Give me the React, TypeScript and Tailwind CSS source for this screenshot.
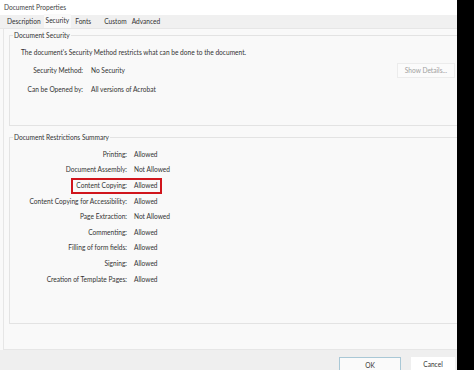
const restrictions: [string, string][] = [
  ["Printing:", "Allowed"],
  ["Document Assembly:", "Not Allowed"],
  ["Content Copying:", "Allowed"],
  ["Content Copying for Accessibility:", "Allowed"],
  ["Page Extraction:", "Not Allowed"],
  ["Commenting:", "Allowed"],
  ["Filling of form fields:", "Allowed"],
  ["Signing:", "Allowed"],
  ["Creation of Template Pages:", "Allowed"],
];

const tabs = ["Description", "Security", "Fonts", "Custom", "Advanced"];

function GroupBox({ title, className, children }: { title: string; className: string; children: React.ReactNode }) {
  return (
    <div className={`relative ml-[5px] mr-[-4px] border border-[#e3e3e3] ${className}`}>
      <span className="absolute left-[3px] top-[-6px] bg-[#f9f9f9] px-px leading-[10px] text-[#333]">{title}</span>
      {children}
    </div>
  );
}

export default function App() {
  return (
    <div
      className="flex h-[370px] w-[474px] overflow-hidden whitespace-nowrap bg-black text-[6.6px] text-[#333]"
      style={{ fontFamily: 'Lato, "Noto Sans", sans-serif' }}
    >
      <div className="flex w-[457px] flex-col overflow-hidden bg-[#f9f9f9]">
        <div className="flex h-[15px] items-center bg-white pl-[4px] text-[#444]">Document Properties</div>

        <div className="flex h-[14px] items-end border-b border-[#e6e6e6] bg-[#f0f0f0] pl-[5px]">
          {tabs.map((t) => (
            <div
              key={t}
              className={
                t === "Security"
                  ? "mr-[2px] h-[14px] bg-[#f9f9f9] px-[2px] pt-[1px] leading-[10px]"
                  : t === "Fonts"
                    ? "mr-[9px] h-[12px] px-[2px] leading-[10px]"
                    : "mr-px h-[12px] px-[2px] leading-[10px]"
              }
            >
              {t}
            </div>
          ))}
        </div>

        <div className="ml-[3px] flex flex-1 flex-col border-b border-l border-[#e6e6e6] pt-[6px]">
          <GroupBox title="Document Security" className="h-[91px] pt-[11px]">
            <div className="pl-[11px] leading-[10px]">
              The document's Security Method restricts what can be done to the document.
            </div>
            <div className="mt-[6px] flex h-[15px] items-center justify-between">
              <div className="flex">
                <span className="w-[73px] text-right">Security Method:</span>
                <span className="ml-[8px]">No Security</span>
              </div>
              <button className="mr-[5px] h-[15px] w-[58px] border border-[#ececec] bg-[#fbfbfb] text-[#a0a0a0]">
                Show Details...
              </button>
            </div>
            <div className="mt-[4px] flex h-[15px] items-center">
              <span className="w-[73px] text-right">Can be Opened by:</span>
              <span className="ml-[8px]">All versions of Acrobat</span>
            </div>
          </GroupBox>

          <GroupBox title="Document Restrictions Summary" className="mt-[11px] h-[187px] pt-[9px]">
            <div className="flex flex-col">
              {restrictions.map(([label, value]) => (
                <div key={label} className="flex h-[15.6px] items-center">
                  {label === "Content Copying:" ? (
                    <div className="ml-[61px] flex h-[16px] w-[91px] items-center border-2 border-[#d0151c]">
                      <span className="w-[54px] text-right">{label}</span>
                      <span className="ml-[7px]">{value}</span>
                    </div>
                  ) : (
                    <>
                      <span className="w-[117px] text-right">{label}</span>
                      <span className="ml-[7px]">{value}</span>
                    </>
                  )}
                </div>
              ))}
            </div>
          </GroupBox>
        </div>

        <div className="flex h-[20px] items-end justify-end gap-[10px] bg-[#efefef] pr-[2px]">
          <button className="h-[13px] w-[62px] border border-b-0 border-[#a9c8d6] bg-[#fafafa] pt-[1px] leading-[10px]">
            OK
          </button>
          <button className="h-[13px] w-[44px] bg-white pt-[1px] leading-[10px]">Cancel</button>
        </div>
      </div>
      <div className="flex-1 bg-black" />
    </div>
  );
}
